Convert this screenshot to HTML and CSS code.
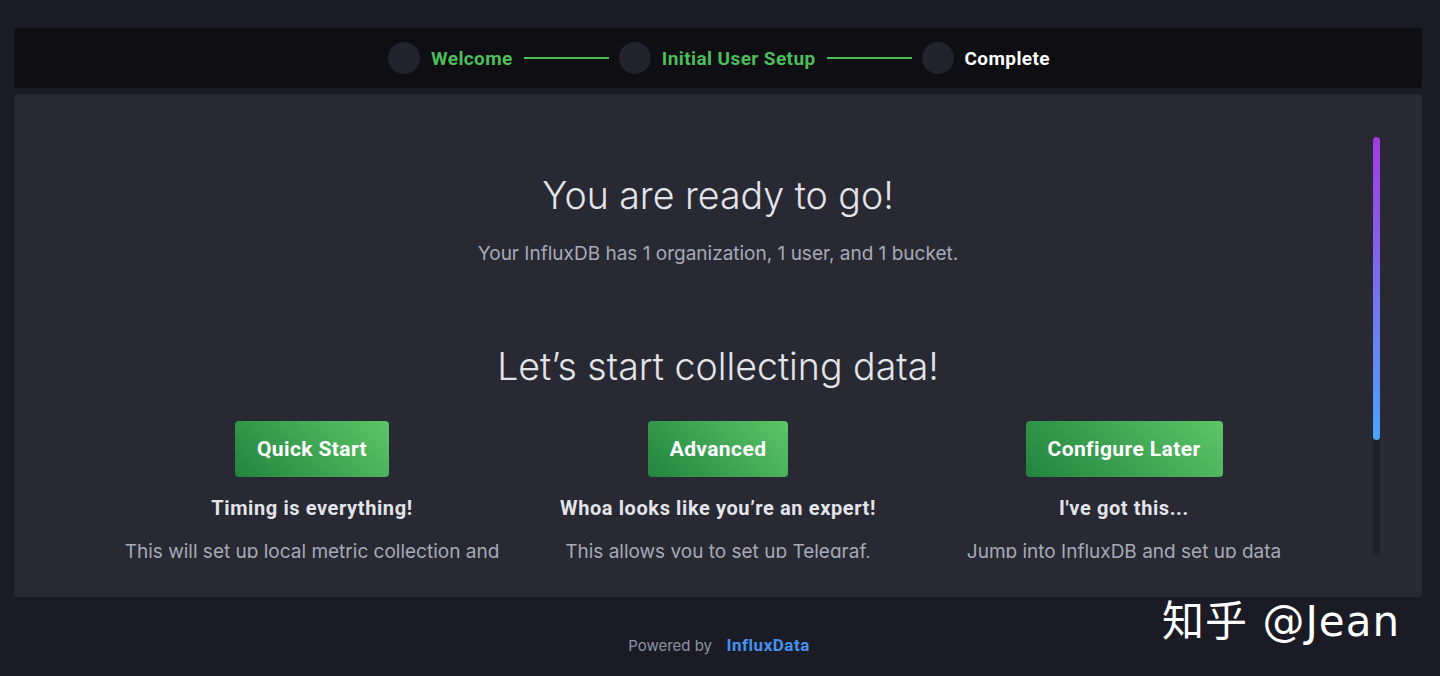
FILE: index.html
```html
<!DOCTYPE html>
<html lang="en">
<head>
    <meta charset="UTF-8">
    <meta name="viewport" content="width=device-width, initial-scale=1.0">
    <title>InfluxDB - Setup Complete</title>
    <link rel="stylesheet" href="styles.css">
</head>
<body>
    <div class="wizard">
        <!-- barra de passos -->
        <div class="steps">
            <div class="step done">
                <span class="dot"></span>
                <span class="label">Welcome</span>
            </div>
            <span class="connector"></span>
            <div class="step done">
                <span class="dot"></span>
                <span class="label">Initial User Setup</span>
            </div>
            <span class="connector"></span>
            <div class="step current">
                <span class="dot"></span>
                <span class="label">Complete</span>
            </div>
        </div>

        <!-- painel principal -->
        <div class="panel">
            <div class="scroll">
                <h1 class="title">You are ready to go!</h1>
                <p class="subtitle">Your InfluxDB has 1 organization, 1 user, and 1 bucket.</p>

                <h2 class="title second">Let’s start collecting data!</h2>

                <div class="options">
                    <div class="option">
                        <button class="btn">Quick Start</button>
                        <h3>Timing is everything!</h3>
                        <p>This will set up local metric collection and allow you to explore the features of InfluxDB quickly.</p>
                    </div>
                    <div class="option">
                        <button class="btn">Advanced</button>
                        <h3>Whoa looks like you’re an expert!</h3>
                        <p>This allows you to set up Telegraf, scrapers, and much more.</p>
                    </div>
                    <div class="option">
                        <button class="btn">Configure Later</button>
                        <h3>I've got this...</h3>
                        <p>Jump into InfluxDB and set up data collection when you’re ready.</p>
                    </div>
                </div>
            </div>
            <div class="scrollbar"><div class="thumb"></div></div>
        </div>

        <div class="footer">
            <span class="powered">Powered by</span>
            <span class="brand">InfluxData</span>
        </div>
    </div>

    <div class="watermark">知乎 @Jean</div>
</body>
</html>
```

FILE: styles.css
```css
* {
    box-sizing: border-box;
    margin: 0;
    padding: 0;
}

body {
    background-color: #1b1b26;
    font-family: Inter, "Noto Sans", sans-serif;
    height: 676px;
    overflow: hidden;
    position: relative;
}

.wizard {
    padding: 28px 18px 0 14px;
}

.steps {
    height: 60px;
    background-color: #0e0e13;
    border-radius: 3px;
    display: flex;
    align-items: center;
    justify-content: center;
    padding-left: 2px;
}

.step {
    display: flex;
    align-items: center;
    gap: 11px;
}

.dot {
    width: 32px;
    height: 32px;
    border-radius: 50%;
    background-color: #23232d;
}

.label {
    font-family: Roboto, "Liberation Sans", sans-serif;
    font-weight: 700;
    font-size: 19px;
    letter-spacing: 0.4px;
    color: #4ebd5c;
}

.step.current .label {
    color: #ffffff;
}

.connector {
    width: 85px;
    height: 2px;
    background-color: #4ebd5c;
    margin: 0 10px 0 11px;
}

.panel {
    margin-top: 6px;
    height: 503px;
    background-color: #292933;
    border-radius: 3px;
    position: relative;
    padding: 43px 0 37px;
}

.scroll {
    height: 421px;
    overflow: hidden;
    text-align: center;
}

.title {
    font-weight: 300;
    font-size: 37.5px;
    color: #e3e4ea;
    line-height: 46px;
    margin-top: 36px;
}

.subtitle {
    font-size: 19px;
    color: #a6a9b8;
    margin-top: 23px;
}

.second {
    margin-top: 79px;
}

.options {
    display: grid;
    grid-template-columns: repeat(3, 406px);
    justify-content: center;
    margin-top: 31px;
}

.option {
    display: flex;
    flex-direction: column;
    align-items: center;
    padding: 0 12px;
}

.btn {
    height: 56px;
    padding: 0 22px;
    border: 0;
    border-radius: 4px;
    background: linear-gradient(45deg, #22843f 0%, #5cc668 100%);
    color: #ffffff;
    font-family: Roboto, "Liberation Sans", sans-serif;
    font-weight: 700;
    font-size: 21px;
    letter-spacing: 0.4px;
}

.option h3 {
    font-family: Roboto, "Liberation Sans", sans-serif;
    font-weight: 700;
    font-size: 20px;
    letter-spacing: 0.6px;
    color: #e3e4ea;
    margin-top: 19px;
}

.option p {
    font-size: 19px;
    color: #a6a9b8;
    margin-top: 19px;
    line-height: 26px;
}

.scrollbar {
    position: absolute;
    top: 43px;
    right: 42px;
    width: 7px;
    height: 418px;
    border-radius: 4px;
    background-color: #1f1f28;
}

.thumb {
    height: 303px;
    border-radius: 4px;
    background: linear-gradient(180deg, #a33be3 0%, #4aa5f7 100%);
}

.footer {
    text-align: center;
    margin-top: 38px;
    padding-left: 2px;
}

.powered {
    font-size: 15px;
    color: #8f92a3;
    margin-right: 10px;
}

.brand {
    font-family: Roboto, "Liberation Sans", sans-serif;
    font-weight: 700;
    font-size: 17px;
    letter-spacing: 0.5px;
    color: #4592ee;
}

.watermark {
    position: absolute;
    right: 40px;
    top: 587px;
    font-family: "DejaVu Sans", "Noto Sans CJK SC", sans-serif;
    font-size: 42px;
    color: #ffffff;
    letter-spacing: 1px;
}
```
